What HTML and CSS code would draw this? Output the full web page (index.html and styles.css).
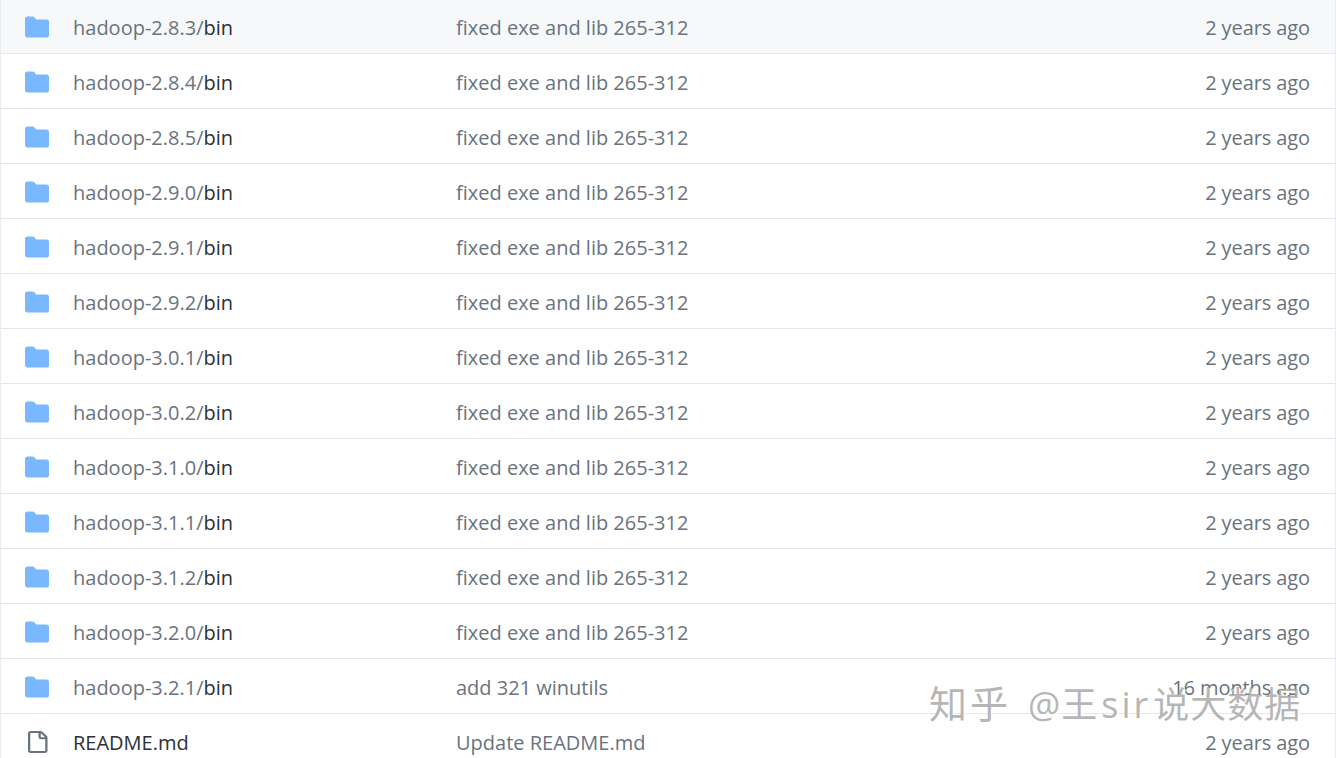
FILE: index.html
```html
<!DOCTYPE html>
<html lang="en">
<head>
  <meta charset="UTF-8">
  <meta name="viewport" content="width=device-width, initial-scale=1.0">
  <title>winutils</title>
  <link rel="stylesheet" href="styles.css">
</head>
<body>
<svg class="icon-defs" width="0" height="0">
  <symbol id="folder" viewBox="0 0 16 16">
    <path d="M1.75 1A1.75 1.75 0 0 0 0 2.75v10.5C0 14.22.78 15 1.75 15h12.5A1.75 1.75 0 0 0 16 13.25v-8.5A1.75 1.75 0 0 0 14.25 3H7.5a.25.25 0 0 1-.2-.1l-.9-1.2C6.07 1.26 5.55 1 5 1H1.75Z"/>
  </symbol>
  <symbol id="file" viewBox="0 0 16 16" preserveAspectRatio="none">
    <path d="M2 1.75C2 .784 2.784 0 3.75 0h6.586c.464 0 .909.184 1.237.513l2.914 2.914c.329.328.513.773.513 1.237v9.586A1.75 1.75 0 0 1 13.25 16h-9.5A1.75 1.75 0 0 1 2 14.25Zm1.75-.25a.25.25 0 0 0-.25.25v12.5c0 .138.112.25.25.25h9.5a.25.25 0 0 0 .25-.25V6h-2.75A1.75 1.75 0 0 1 9 4.25V1.5Zm6.75.062V4.25c0 .138.112.25.25.25h2.688l-.011-.013-2.914-2.914-.013-.011Z"/>
  </symbol>
</svg>
<div class="file-list">
  <div class="file-row first-row">
    <svg class="folder-icon"><use href="#folder"/></svg>
    <div class="file-name"><span class="dir">hadoop-2.8.3/</span>bin</div>
    <div class="commit">fixed exe and lib 265-312</div>
    <div class="age">2 years ago</div>
  </div>
  <div class="file-row">
    <svg class="folder-icon"><use href="#folder"/></svg>
    <div class="file-name"><span class="dir">hadoop-2.8.4/</span>bin</div>
    <div class="commit">fixed exe and lib 265-312</div>
    <div class="age">2 years ago</div>
  </div>
  <div class="file-row">
    <svg class="folder-icon"><use href="#folder"/></svg>
    <div class="file-name"><span class="dir">hadoop-2.8.5/</span>bin</div>
    <div class="commit">fixed exe and lib 265-312</div>
    <div class="age">2 years ago</div>
  </div>
  <div class="file-row">
    <svg class="folder-icon"><use href="#folder"/></svg>
    <div class="file-name"><span class="dir">hadoop-2.9.0/</span>bin</div>
    <div class="commit">fixed exe and lib 265-312</div>
    <div class="age">2 years ago</div>
  </div>
  <div class="file-row">
    <svg class="folder-icon"><use href="#folder"/></svg>
    <div class="file-name"><span class="dir">hadoop-2.9.1/</span>bin</div>
    <div class="commit">fixed exe and lib 265-312</div>
    <div class="age">2 years ago</div>
  </div>
  <div class="file-row">
    <svg class="folder-icon"><use href="#folder"/></svg>
    <div class="file-name"><span class="dir">hadoop-2.9.2/</span>bin</div>
    <div class="commit">fixed exe and lib 265-312</div>
    <div class="age">2 years ago</div>
  </div>
  <div class="file-row">
    <svg class="folder-icon"><use href="#folder"/></svg>
    <div class="file-name"><span class="dir">hadoop-3.0.1/</span>bin</div>
    <div class="commit">fixed exe and lib 265-312</div>
    <div class="age">2 years ago</div>
  </div>
  <div class="file-row">
    <svg class="folder-icon"><use href="#folder"/></svg>
    <div class="file-name"><span class="dir">hadoop-3.0.2/</span>bin</div>
    <div class="commit">fixed exe and lib 265-312</div>
    <div class="age">2 years ago</div>
  </div>
  <div class="file-row">
    <svg class="folder-icon"><use href="#folder"/></svg>
    <div class="file-name"><span class="dir">hadoop-3.1.0/</span>bin</div>
    <div class="commit">fixed exe and lib 265-312</div>
    <div class="age">2 years ago</div>
  </div>
  <div class="file-row">
    <svg class="folder-icon"><use href="#folder"/></svg>
    <div class="file-name"><span class="dir">hadoop-3.1.1/</span>bin</div>
    <div class="commit">fixed exe and lib 265-312</div>
    <div class="age">2 years ago</div>
  </div>
  <div class="file-row">
    <svg class="folder-icon"><use href="#folder"/></svg>
    <div class="file-name"><span class="dir">hadoop-3.1.2/</span>bin</div>
    <div class="commit">fixed exe and lib 265-312</div>
    <div class="age">2 years ago</div>
  </div>
  <div class="file-row">
    <svg class="folder-icon"><use href="#folder"/></svg>
    <div class="file-name"><span class="dir">hadoop-3.2.0/</span>bin</div>
    <div class="commit">fixed exe and lib 265-312</div>
    <div class="age">2 years ago</div>
  </div>
  <div class="file-row">
    <svg class="folder-icon"><use href="#folder"/></svg>
    <div class="file-name"><span class="dir">hadoop-3.2.1/</span>bin</div>
    <div class="commit">add 321 winutils</div>
    <div class="age">16 months ago</div>
  </div>
  <div class="file-row">
    <svg class="file-icon"><use href="#file"/></svg>
    <div class="file-name">README.md</div>
    <div class="commit">Update README.md</div>
    <div class="age">2 years ago</div>
  </div>
</div>
<div class="watermark"><span class="watermark-logo">知乎</span>@王<span class="watermark-sir">sir</span>说大数据</div>
</body>
</html>
```

FILE: styles.css
```css
html,
body {
  height: 100%;
}

body {
  margin: 0;
  overflow: hidden;
  font-family: "Open Sans", "Noto Sans CJK SC", sans-serif;
  font-size: 20px;
  color: #2b3137;
  background-color: #ffffff;
}

.icon-defs {
  position: absolute;
}

.file-list {
  margin-top: -1px;
  border-left: 1px solid #eaecef;
  border-right: 1px solid #eaecef;
}

.file-row {
  display: flex;
  align-items: center;
  box-sizing: border-box;
  height: 55px;
  padding-top: 2px;
  border-bottom: 1px solid #e4e6e9;
}

.first-row {
  background-color: #f6f8fa;
}

.folder-icon,
.file-icon {
  flex: none;
  width: 24px;
  height: 24px;
  margin-left: 24px;
  margin-right: 24px;
}

.folder-icon {
  fill: #79b8ff;
}

.file-icon {
  height: 22px;
  fill: #6a737d;
}

.file-name {
  width: 383px;
  flex: none;
}

.dir {
  color: #6a737d;
}

.commit {
  flex: 1;
  color: #6a737d;
}

.age {
  margin-right: 25px;
  color: #6a737d;
  letter-spacing: -0.1px;
}

.watermark {
  position: absolute;
  left: 929px;
  top: 678px;
  font-size: 36px;
  line-height: 50px;
  letter-spacing: 1px;
  white-space: nowrap;
  color: rgba(150, 150, 150, 0.7);
  text-shadow: 1px 1px 0 #ffffff, 2px 2px 0 rgba(255, 255, 255, 0.8);
}

.watermark-logo {
  margin-right: 17px;
  font-size: 38px;
  letter-spacing: 3px;
}

.watermark-sir {
  margin-left: 3px;
  margin-right: 2px;
  letter-spacing: 3px;
}
```
